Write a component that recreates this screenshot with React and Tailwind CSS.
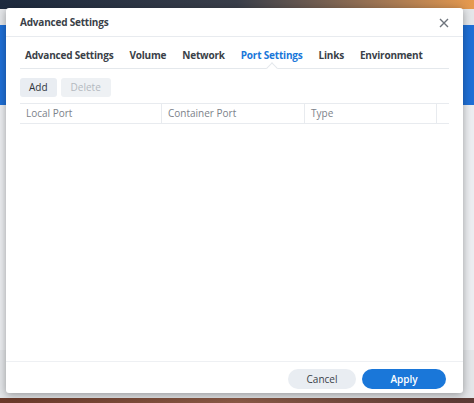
import React from 'react';

const tabs = ['Advanced Settings', 'Volume', 'Network', 'Port Settings', 'Links', 'Environment'];

export default function App() {
  return (
    <div className="relative w-[474px] h-[403px] overflow-hidden bg-[#e4e6e9]" style={{ fontFamily: '"Open Sans", "Noto Sans", sans-serif' }}>
      {/* backdrop */}
      <div className="absolute inset-x-0 top-0 h-[9px] bg-gradient-to-r from-[#1d2a3e] via-[#3a3f4a] to-[#e79a4e]" />
      <div className="absolute inset-x-0 top-[25px] h-[80px] bg-[#1f6fd6]" />
      <div className="absolute inset-x-0 top-[105px] h-[245px] bg-[#eceef1]" />
      <div className="absolute inset-x-0 bottom-0 h-[5px] bg-gradient-to-r from-[#6b3a2a] via-[#8a5a46] to-[#5b3a35]" />

      {/* dialog */}
      <div className="absolute left-[6px] top-[8px] w-[457px] h-[385px] bg-white rounded-[3px] shadow-[0_2px_8px_rgba(0,0,0,0.35)] flex flex-col">
        <div className="h-[29px] flex items-center justify-between pl-[14px] pr-[14px] pt-[1px] border-b border-[#e8ebef]">
          <span className="text-[10px] font-bold tracking-[-0.2px] text-[#3a3f48]">Advanced Settings</span>
          <svg width="10" height="10" viewBox="0 0 10 10" className="text-[#6e747c]">
            <path d="M1 1 L9 9 M9 1 L1 9" stroke="currentColor" strokeWidth="1.4" />
          </svg>
        </div>

        <div className="px-[14px] flex-1 flex flex-col">
          <div className="relative flex items-center gap-[16px] h-[32px] pl-[5px] pt-[5px] border-b border-[#e4e8ec]">
            {tabs.map((t) => (
              <span
                key={t}
                className={`relative text-[10px] font-bold tracking-[-0.2px] whitespace-nowrap ${t === 'Port Settings' ? 'text-[#1a77d9]' : 'text-[#3a3f48]'}`}
              >
                {t}
                {t === 'Port Settings' && (
                  <span className="absolute left-1/2 -translate-x-1/2 top-[16px] w-[8px] h-[8px] bg-white border-l border-t border-[#e4e8ec] rotate-45" />
                )}
              </span>
            ))}
          </div>

          <div className="flex gap-[4px] mt-[9px]">
            <button className="h-[19px] px-[9px] rounded-[3px] bg-[#e9edf2] text-[10px] text-[#2f343b]">Add</button>
            <button className="h-[19px] px-[10px] rounded-[3px] bg-[#eef1f4] text-[10px] text-[#b4b9bf]">Delete</button>
          </div>

          <div className="mt-[6px] flex h-[21px] border-t border-b border-[#e8ebef] text-[10px] text-[#7c828a]">
            <div className="w-[142px] flex items-center pl-[6px] border-r border-[#e8ebef]">Local Port</div>
            <div className="w-[143px] flex items-center pl-[6px] border-r border-[#e8ebef]">Container Port</div>
            <div className="w-[132px] flex items-center pl-[6px] border-r border-[#e8ebef]">Type</div>
            <div className="flex-1" />
          </div>
          <div className="flex-1" />
        </div>

        <div className="h-[32px] border-t border-[#eef0f3] flex items-start justify-end gap-[6px] pr-[17px] pt-[7px]">
          <button className="w-[68px] h-[20px] rounded-full bg-[#e9edf2] text-[10px] text-[#3a3f48]">Cancel</button>
          <button className="w-[84px] h-[20px] rounded-full bg-[#1a77d9] text-[10px] font-semibold text-white">Apply</button>
        </div>
      </div>
    </div>
  );
}
